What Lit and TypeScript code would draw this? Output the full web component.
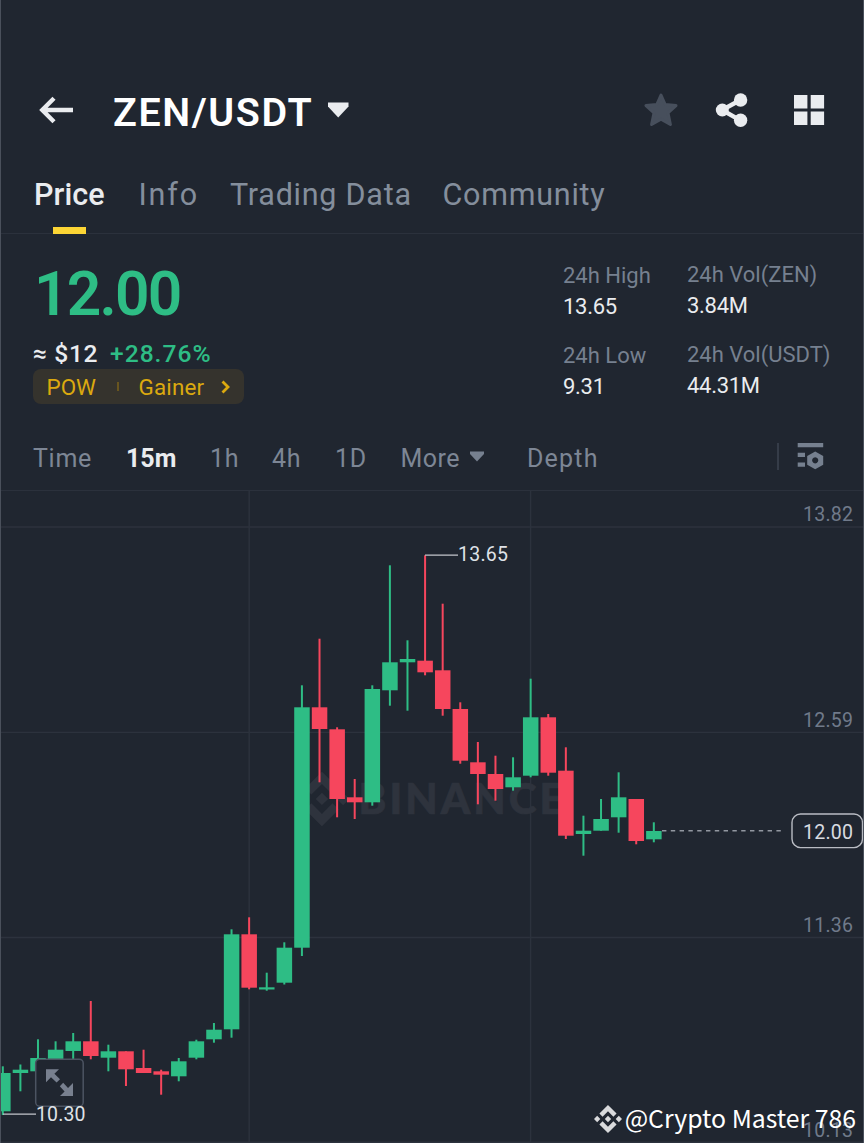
import { LitElement, html, svg, css } from "lit";
import { customElement } from "lit/decorators.js";

type Candle = [up: number, high: number, open: number, close: number, low: number];

/* direction, wick top, body top, body bottom, wick bottom */
const CANDLES: Candle[] = [
  [1, 1066.3, 1073, 1111.3, 1115],
  [1, 1064.5, 1069.7, 1073, 1091.3],
  [1, 1039.3, 1058, 1071.3, 1071.3],
  [1, 1041.3, 1049.7, 1062, 1062],
  [1, 1033, 1041.3, 1051, 1062],
  [0, 1001, 1041.3, 1056, 1059.3],
  [1, 1044.7, 1051.3, 1057.7, 1071.3],
  [0, 1051.3, 1051.3, 1069.3, 1086],
  [0, 1049.7, 1068, 1073, 1073],
  [0, 1069.7, 1071.3, 1074.7, 1094.7],
  [1, 1058, 1061.3, 1076.3, 1081.3],
  [1, 1039.7, 1041.3, 1057.7, 1059.3],
  [1, 1023, 1029.7, 1039.3, 1042.7],
  [1, 929.3, 934.3, 1029.3, 1037.7],
  [0, 917.3, 934.3, 987.7, 989.3],
  [1, 972.7, 987.3, 989.5, 990.7],
  [1, 942.3, 947.7, 982.7, 984.5],
  [1, 685.3, 707.3, 947.7, 956],
  [0, 638.7, 707.3, 729, 782.3],
  [0, 727.3, 729.3, 799, 817.3],
  [0, 779, 797.3, 802.3, 819],
  [1, 685.3, 689, 802.3, 805.7],
  [1, 565.3, 662.3, 690.3, 705.7],
  [1, 640.3, 659, 662.3, 710.7],
  [0, 555.3, 660.7, 672.3, 675.3],
  [0, 603.7, 670.3, 709, 715.7],
  [0, 702.3, 709, 760.7, 763.7],
  [0, 742, 762.3, 774, 804.3],
  [0, 755.7, 774, 789, 800.7],
  [1, 757.3, 777.3, 787.3, 790.7],
  [1, 678.7, 717.3, 775.7, 777.3],
  [0, 714, 717.3, 772.7, 775.7],
  [0, 747.3, 770.7, 835.7, 839],
  [1, 815.7, 830.7, 834, 855.7],
  [1, 799, 819, 830.7, 830.7],
  [1, 772.3, 797.3, 817.3, 832.7],
  [0, 799, 799, 841, 844.3],
  [1, 822.3, 831, 839.3, 842.3],
];

const BRAND =
  "M16.624 13.9202l2.7175 2.7154-7.353 7.353-7.353-7.352 2.7175-2.7164 4.6355 4.6595 4.6356-4.6595zm4.6366-4.6366L24 12l-2.7154 2.7164L18.5682 12l2.6924-2.7164zm-9.272.001l2.7163 2.6914-2.7164 2.7174v-.001L9.2721 12l2.7164-2.7154zm-9.2722-.001L5.4088 12l-2.6914 2.6924L0 12l2.7164-2.7164zM11.9885.0115l7.353 7.329-2.7174 2.7154-4.6356-4.6356-4.6355 4.6595-2.7174-2.7154 7.353-7.353z";

@customElement("candle-chart")
class CandleChart extends LitElement {
  static styles = css`
    :host { display: block; height: 652px; }
    svg { display: block; }
    text { font-family: Roboto, sans-serif; }
    .grid { stroke: #2c323d; stroke-width: 1.4; }
    .up { fill: #2ebd85; }
    .down { fill: #f6465d; }
    .mark { fill: #2e333d; }
    .brand { font-family: Lato, sans-serif; font-weight: 900; font-size: 42px; stroke: #2e333d; stroke-width: 0.7; }
    .axis { fill: #707a8a; font-size: 19.5px; }
    .peak { fill: #dfe2e7; font-size: 19.5px; }
    .lead { stroke: #c3c6cb; stroke-width: 1.3; }
    .dash { stroke: #9297a0; stroke-width: 1.5; stroke-dasharray: 4.4 4.4; }
    .tag { fill: #202630; stroke: #b9bcc3; stroke-width: 1.4; }
    .last { fill: #d8dbe0; font-size: 19.6px; }
    .box { fill: #202630; stroke: #4c5462; stroke-width: 1.5; }
    .arrows { fill: #78808f; }
  `;

  render() {
    return html`<svg width="864" height="652" viewBox="0 491 864 652">
      ${[527, 732.4, 937.5, 1142.3].map((y) => svg`<line class="grid" x1="0" x2="864" y1=${y} y2=${y} />`)}
      ${[249.2, 530.6].map((x) => svg`<line class="grid" x1=${x} x2=${x} y1="491" y2="1143" />`)}
      <g class="mark">
        <path transform="translate(294.6 771.6) scale(2.28)" d=${BRAND} />
        <text class="brand" x="358.5" y="813.7" textLength="205">BINANCE</text>
      </g>
      ${CANDLES.map(([up, high, top, bottom, low], i) => {
        const x = 2.8 + i * 17.595;
        return svg`<g class=${up ? "up" : "down"}>
          <rect x=${x - 1} y=${high} width="2" height=${low - high} />
          <rect x=${x - 7.7} y=${top} width="15.5" height=${bottom - top} />
        </g>`;
      })}
      <text class="axis" x="803" y="521" textLength="50">13.82</text>
      <text class="axis" x="803" y="726.5" textLength="50">12.59</text>
      <text class="axis" x="803" y="931.5" textLength="50">11.36</text>
      <text class="axis" x="803" y="1136.5" textLength="50">10.13</text>
      <line class="lead" x1="425" x2="458" y1="555.2" y2="555.2" />
      <text class="peak" x="458" y="561" textLength="50">13.65</text>
      <line class="dash" x1="662" x2="781" y1="830.8" y2="830.8" />
      <rect class="tag" x="792" y="814" width="70.5" height="33.6" rx="8.5" />
      <text class="last" x="803" y="839" textLength="50">12.00</text>
      <rect class="box" x="35.7" y="1059.2" width="47.5" height="47" rx="4" />
      <path class="arrows" d="M46 1069.3H59L54.4 1073.8 60 1079.2 56.6 1082.6 51 1077.2 46 1082.2zM73 1096H60L64.6 1091.4 59.8 1086.2 63.2 1082.8 68 1088 73 1083z" />
      <line class="lead" x1="3" x2="36" y1="1114.2" y2="1114.2" />
      <text class="peak" x="36" y="1121" textLength="49.5">10.30</text>
    </svg>`;
  }
}

@customElement("app-root")
class AppRoot extends LitElement {
  static styles = css`
    :host {
      display: block; position: relative; width: 864px; height: 1143px; overflow: hidden;
      box-sizing: border-box; background: #202630; color: #eaecef;
      font-family: Roboto, sans-serif; white-space: nowrap;
    }
    :host::after {
      content: ""; position: absolute; inset: 0; pointer-events: none;
      border: solid #4a505b; border-width: 0 1px;
    }
    svg { display: block; flex: none; }
    header { display: flex; align-items: center; height: 80px; padding: 72px 39px 0 39px; }
    .back { margin: -4px 39px 0 0; }
    .pair { font-size: 39.4px; font-weight: 600; color: #fff; line-height: 80px; padding-top: 1px; width: 215px; letter-spacing: 1.6px; }
    .caret { margin-top: -5px; }
    .actions { display: flex; gap: 37px; margin: -4px 0 0 auto; }
    .share { margin-right: 5px; }
    nav { display: flex; height: 82px; box-sizing: border-box; padding: 4px 0 0 34px; border-bottom: 1.5px solid #2b313c; color: #848e9c; }
    .tab { font-size: 30.5px; line-height: 77px; position: relative; font-weight: 450; letter-spacing: 0.75px; }
    .on { color: #eaecef; font-weight: 500; letter-spacing: 0.1px; }
    .on::after { content: ""; position: absolute; left: 19px; top: 71px; width: 33px; height: 7px; background: #fcd535; }
    .t1 { width: 104.5px; } .t2 { width: 91.5px; letter-spacing: 1.8px; } .t3 { width: 212.5px; }
    .quote { display: flex; height: 187px; }
    .left { width: 563px; box-sizing: border-box; padding: 25px 0 0 33px; }
    .price { color: #2ebd85; font-size: 60.5px; font-weight: 600; line-height: 72px; letter-spacing: -1.8px; padding-left: 1px; }
    .fiat { display: flex; box-sizing: border-box; height: 38px; font-size: 24.6px; font-weight: 500; line-height: 38px; padding-top: 4px; }
    .approx { width: 77px; letter-spacing: 0.6px; }
    .change { color: #2ebd85; letter-spacing: 1px; }
    .badge {
      display: flex; align-items: center; width: 211px; height: 35px; box-sizing: border-box; padding-left: 13.5px;
      border-radius: 8px; background: #35332d; color: #dba90f; font-size: 22.4px; line-height: 36px;
    }
    .pow { width: 70px; }
    .sep { width: 2px; height: 9px; background: #68551f; margin-right: 20px; }
    .gainer { width: 82.5px; letter-spacing: 0.2px; }
    .stats { display: grid; grid-template-columns: 124px auto; align-content: start; font-size: 22px; }
    .cell { padding-top: 25.5px; height: 54.7px; }
    .up1 { margin-top: -1px; }
    .k { color: #76808f; line-height: 31px; }
    .v { line-height: 32px; color: #eaecef; letter-spacing: -0.3px; }
    .frames { display: flex; align-items: center; height: 70px; box-sizing: border-box; padding: 5px 40.5px 0 33px; border-bottom: 1.5px solid #2b313c; color: #7d8695; font-size: 25px; }
    .f { line-height: 60px; padding-top: 1px; letter-spacing: 0.7px; }
    .sel { font-weight: 700; color: #eaecef; letter-spacing: 0; }
    .f1 { width: 93px; } .f2 { width: 84px; } .f3 { width: 62px; } .f4 { width: 63px; }
    .f5 { width: 65.5px; } .f6 { width: 69px; letter-spacing: 0.5px; }
    .tri { margin: -4px 43.5px 0 0; }
    .depth { letter-spacing: 1.2px; }
    .bar { width: 1.5px; height: 27px; background: #353c48; margin: -3px 18px 0 auto; }
    .tune { margin-top: -4px; }
    .credit {
      position: absolute; right: 8px; bottom: 8px; display: flex; align-items: center; gap: 3px;
      font-family: "Noto Sans CJK SC", sans-serif; font-size: 24.8px; line-height: 36px; color: #fff;
    }
    .logo { fill: #d9dadc; margin-top: 4px; }
  `;

  render() {
    return html`
      <header>
        <svg class="back" width="35" height="30" viewBox="39 95 35 30" fill="none" stroke="#eaecef" stroke-width="4.4">
          <path d="M54 98.3 42.3 110 54 121.7M42 110H73" />
        </svg>
        <div class="pair">ZEN/USDT</div>
        <svg class="caret" width="21" height="16" viewBox="0 0 21 16"><path fill="#eaecef" d="M0 .5h20.5v4L10.2 15.5 0 4.5z" /></svg>
        <div class="actions">
          <svg width="34" height="34" viewBox="644 93 34 34" fill="#474f5c" stroke="#474f5c" stroke-width="3" stroke-linejoin="round">
            <path d="M661 95 665.2 104.5 676 105.6 668 112.9 670.4 124.5 661 119.3 651.6 124.5 654 112.9 646 105.6 656.8 104.5z" />
          </svg>
          <svg class="share" width="34" height="34" viewBox="715 93 34 34" fill="#eaecef">
            <path d="M740.4 100 722 110 740.4 120.4" fill="none" stroke="#eaecef" stroke-width="4.4" />
            <circle cx="722.3" cy="110" r="6.5" /><circle cx="740.6" cy="100" r="6.7" /><circle cx="740.6" cy="120.2" r="6.7" />
          </svg>
          <svg width="34" height="34" viewBox="791 93 34 34" fill="#eaecef">
            <path d="M794 95h13.4v13.4H794zM810.7 95h13.4v13.4h-13.4zM794 111.5h13.4v13.4H794zM810.7 111.5h13.4v13.4h-13.4z" />
          </svg>
        </div>
      </header>
      <nav>
        <div class="tab on t1">Price</div>
        <div class="tab t2">Info</div>
        <div class="tab t3">Trading Data</div>
        <div class="tab">Community</div>
      </nav>
      <section class="quote">
        <div class="left">
          <div class="price">12.00</div>
          <div class="fiat"><span class="approx">≈ $12</span><span class="change">+28.76%</span></div>
          <div class="badge">
            <span class="pow">POW</span><span class="sep"></span><span class="gainer">Gainer</span>
            <svg width="10" height="14" viewBox="0 0 10 14" fill="none" stroke="#dba90f" stroke-width="2.8"><path d="M1.5 1.5 7 7 1.5 12.5" /></svg>
          </div>
        </div>
        <div class="stats">
          <div class="cell"><div class="k">24h High</div><div class="v">13.65</div></div>
          <div class="cell up1"><div class="k">24h Vol(ZEN)</div><div class="v">3.84M</div></div>
          <div class="cell"><div class="k">24h Low</div><div class="v">9.31</div></div>
          <div class="cell up1"><div class="k">24h Vol(USDT)</div><div class="v">44.31M</div></div>
        </div>
      </section>
      <div class="frames">
        <span class="f f1">Time</span><span class="f sel f2">15m</span><span class="f f3">1h</span>
        <span class="f f4">4h</span><span class="f f5">1D</span><span class="f f6">More</span>
        <svg class="tri" width="14" height="11" viewBox="0 0 14 11"><path fill="#76808f" d="M0 .5h14v2.6L7 10.5 0 3.1z" /></svg>
        <span class="f depth">Depth</span>
        <span class="bar"></span>
        <svg class="tune" width="27" height="28" viewBox="797 442 27 28" fill="#76808f">
          <path d="M797.7 443h25.5v4.2h-25.5zM797.7 452.7h7.3v4.2h-7.3zM797.7 462.6h7.3v4.2h-7.3z" />
          <path fill-rule="evenodd" d="M815.2 451.4l8 4.5v8.9l-8 4.5-8-4.5v-8.9zM815.2 457.2a3.1 3.1 0 1 0 .01 0z" />
        </svg>
      </div>
      <candle-chart></candle-chart>
      <div class="credit">
        <svg class="logo" width="28" height="28" viewBox="0 0 24 24"><path d=${BRAND} /></svg>
        <span>@Crypto Master 786</span>
      </div>
    `;
  }
}
